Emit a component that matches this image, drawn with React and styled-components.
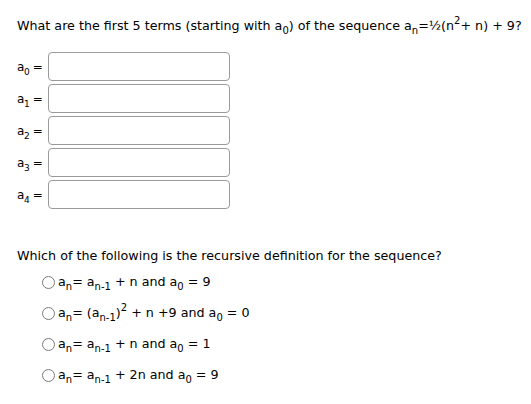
import React from 'react';
import styled, { createGlobalStyle } from 'styled-components';

const GlobalStyle = createGlobalStyle`
  body {
    margin: 0;
    background: #fff;
    font-family: "DejaVu Sans", "Open Sans", sans-serif;
    font-size: 12.7px;
    color: #000;
  }
`;

const Page = styled.div`
  padding: 17px 0 0 17px;
  display: flex;
  flex-direction: column;
`;

const Question = styled.p`
  margin: 0;
  line-height: 18px;
  white-space: nowrap;
`;

const Terms = styled.div`
  display: grid;
  grid-template-columns: 31px 182px;
  row-gap: 3px;
  margin-top: 17px;
  align-items: center;
`;

const Label = styled.span`
  white-space: nowrap;
  font-size: 12px;
  letter-spacing: -0.4px;
`;

const Box = styled.input`
  box-sizing: border-box;
  width: 182px;
  height: 29px;
  border: 1px solid #9a9a9a;
  border-radius: 4px;
  background: #fff;
  margin: 0;
  outline: none;
`;

const Second = styled(Question)`
  margin-top: 38px;
`;

const Options = styled.div`
  display: flex;
  flex-direction: column;
  gap: 13px;
  margin-top: 8px;
  padding-left: 25px;
`;

const Option = styled.label`
  display: flex;
  align-items: center;
  gap: 3px;
  line-height: 18px;
  white-space: nowrap;
`;

const Radio = styled.span`
  box-sizing: border-box;
  width: 13px;
  height: 13px;
  border-radius: 50%;
  border: 1px solid #7a7a7a;
  background: #fff;
  flex: none;
`;

const Sub = styled.sub`
  font-size: ${(p) => (p.$small ? '9px' : '10px')};
  vertical-align: -4px;
  line-height: 0;
`;

const Sup = styled.sup`
  font-size: 10px;
  vertical-align: 6px;
  line-height: 0;
`;

const A = ({ s, small }) => (
  <>
    a<Sub $small={small}>{s}</Sub>
  </>
);

export default function App() {
  return (
    <>
      <GlobalStyle />
      <Page>
        <Question>
          What are the first 5 terms (starting with <A s="0" />) of the sequence <A s="n" />=½(n<Sup>2</Sup>+ n) + 9?
        </Question>
        <Terms>
          {[0, 1, 2, 3, 4].map((i) => (
            <React.Fragment key={i}>
              <Label>
                <A s={i} small /> =
              </Label>
              <Box type="text" />
            </React.Fragment>
          ))}
        </Terms>
        <Second>Which of the following is the recursive definition for the sequence?</Second>
        <Options>
          <Option>
            <Radio />
            <span>
              <A s="n" />= <A s="n-1" /> + n and <A s="0" /> = 9
            </span>
          </Option>
          <Option>
            <Radio />
            <span>
              <A s="n" />= (<A s="n-1" />)<Sup>2</Sup> + n +9 and <A s="0" /> = 0
            </span>
          </Option>
          <Option>
            <Radio />
            <span>
              <A s="n" />= <A s="n-1" /> + n and <A s="0" /> = 1
            </span>
          </Option>
          <Option>
            <Radio />
            <span>
              <A s="n" />= <A s="n-1" /> + 2n and <A s="0" /> = 9
            </span>
          </Option>
        </Options>
      </Page>
    </>
  );
}
